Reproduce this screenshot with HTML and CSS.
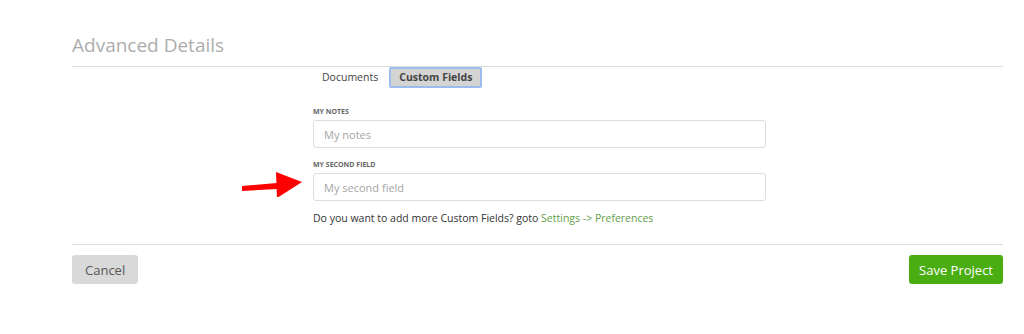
FILE: index.html
```html
<!DOCTYPE html>
<html lang="en">

<head>
    <meta charset="UTF-8">
    <meta name="viewport" content="width=device-width, initial-scale=1.0">
    <title>Advanced Details</title>

    <link rel="stylesheet" href="styles.css">
</head>

<body>
    <div class="panel">
        <h2 class="title">Advanced Details</h2>

        <div class="body">
            <div class="tabs">
                <span class="tab">Documents</span>
                <span class="tab active">Custom Fields</span>
            </div>

            <div class="field">
                <label>MY NOTES</label>
                <input type="text" placeholder="My notes">
            </div>

            <div class="field second">
                <label>MY SECOND FIELD</label>
                <input type="text" placeholder="My second field">
                <svg class="arrow" width="64" height="28" viewBox="0 0 64 28">
                    <polygon points="1,17 36,14 36,20 1,22" fill="#f00" />
                    <polygon points="35,3 61,13 36,29" fill="#f00" />
                </svg>
            </div>

            <p class="hint">Do you want to add more Custom Fields? goto <a href="#">Settings -&gt; Preferences</a></p>
        </div>

        <div class="footer">
            <button class="btn cancel">Cancel</button>
            <button class="btn save">Save Project</button>
        </div>
    </div>
</body>

</html>
```

FILE: styles.css
```css
* {
    margin: 0;
    padding: 0;
    box-sizing: border-box;
}

body {
    font-family: "Open Sans", "Liberation Sans", sans-serif;
    color: #333;
    background: #fff;
}

.panel {
    width: 931px;
    margin-left: 72px;
    padding-top: 33px;
}

.title {
    font-size: 19px;
    font-weight: 400;
    line-height: 24px;
    color: #adadad;
    padding-bottom: 9px;
    border-bottom: 1px solid #ddd;
}

.body {
    padding-left: 241px;
    padding-bottom: 18px;
    border-bottom: 1px solid #ddd;
}

.tabs {
    display: flex;
    align-items: center;
    gap: 11px;
    padding-left: 9px;
    height: 21px;
}

.tab {
    font-size: 10.5px;
    line-height: 17px;
    color: #444;
}

.tab.active {
    font-weight: 700;
    background: #d4d4d4;
    border: 2px solid #9bbcec;
    border-radius: 2px;
    padding: 0 8px;
    height: 21px;
    line-height: 17px;
}

.field {
    margin-top: 19px;
    position: relative;
}

.field.second {
    margin-top: 12px;
}

.field label {
    display: block;
    font-size: 7px;
    font-weight: 700;
    line-height: 10px;
    color: #666;
    margin-bottom: 3px;
}

.field input {
    display: block;
    width: 453px;
    height: 28px;
    border: 1px solid #ddd;
    border-radius: 3px;
    padding: 0 10px;
    font-family: inherit;
    font-size: 11px;
    color: #333;
}

.field input::placeholder {
    color: #a5a5a5;
}

.arrow {
    position: absolute;
    left: -72px;
    top: 9px;
}

.hint {
    font-size: 10.5px;
    line-height: 15px;
    margin-top: 10px;
    color: #333;
}

.hint a {
    color: #62a04a;
    text-decoration: none;
}

.footer {
    display: flex;
    justify-content: space-between;
    padding-top: 10px;
}

.btn {
    font-family: inherit;
    font-size: 13px;
    height: 29px;
    border: none;
    border-radius: 3px;
    padding: 0 13px;
}

.cancel {
    background: #d9d9d9;
    color: #555;
}

.save {
    background: #4aae12;
    color: #fff;
    padding: 0 10px;
}
```
